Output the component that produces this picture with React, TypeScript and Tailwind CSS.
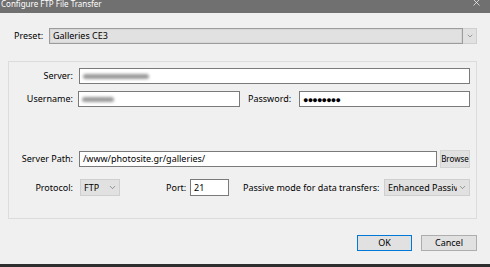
import { ChevronDown, X } from "lucide-react";

const font = { fontFamily: '"Noto Sans", "Liberation Sans", sans-serif' };

const Field = ({ className = "", children }: { className?: string; children?: React.ReactNode }) => (
  <div className={`h-[16px] border border-[#7a7a7a] bg-white flex items-center px-[3px] ${className}`}>{children}</div>
);

const Blur = ({ w }: { w: string }) => (
  <span className={`h-[5px] rounded-full bg-[#9a9a9a] blur-[1.5px] ${w}`} />
);

const Combo = ({ label, className = "" }: { label: string; className?: string }) => (
  <div className={`h-[17px] border border-[#cfcfcf] bg-[#e1e1e1] flex items-center justify-between pl-[3px] pr-[2px] overflow-hidden ${className}`}>
    <span className="whitespace-nowrap overflow-hidden">{label}</span>
    <ChevronDown className="w-[9px] h-[9px] shrink-0 ml-[1px] text-[#555]" strokeWidth={1.5} />
  </div>
);

export default function App() {
  return (
    <div className="w-[490px] h-[267px] bg-[#f0f0f0] text-[9px] text-black flex flex-col overflow-hidden" style={font}>
      {/* title bar */}
      <div className="h-[13px] bg-[#707070] flex items-start justify-between overflow-hidden shrink-0">
        <span className="text-white text-[8px] leading-[9px] mt-[-1px] ml-[1px] whitespace-nowrap">Configure FTP File Transfer</span>
        <X className="w-[11px] h-[11px] mt-[-3px] mr-[8px] text-white" strokeWidth={1.5} />
      </div>

      {/* preset */}
      <div className="flex items-center mt-[15px] pl-[14px]">
        <span className="w-[35px]">Preset:</span>
        <div className="h-[16px] w-[414px] border border-[#9c9c9c] bg-[#e1e1e1] flex items-center pl-[3px] shadow-[inset_0_0_0_1px_#d6d6d6]">
          Galleries CE3
        </div>
        <div className="h-[16px] w-[14px] bg-[#e1e1e1] border border-[#cfcfcf] border-l-0 flex items-center justify-center">
          <ChevronDown className="w-[8px] h-[8px] text-[#555]" strokeWidth={1.5} />
        </div>
      </div>

      {/* group box */}
      <div className="mt-[17px] ml-[8px] w-[469px] h-[158px] border border-[#dcdcdc] flex flex-col pr-[6px]">
        <div className="flex items-center mt-[6px]">
          <span className="w-[64px] text-right">Server:</span>
          <Field className="ml-[6px] flex-1">
            <Blur w="w-[66px]" />
          </Field>
        </div>
        <div className="flex items-center mt-[7px]">
          <span className="w-[64px] text-right">Username:</span>
          <Field className="ml-[5px] w-[162px]">
            <Blur w="w-[32px]" />
          </Field>
          <span className="ml-[8px] w-[42px] whitespace-nowrap">Password:</span>
          <Field className="ml-[9px] flex-1">
            <span className="text-[9px] tracking-[-0.8px] leading-none">●●●●●●●●</span>
          </Field>
        </div>
        <div className="flex items-center mt-[43px]">
          <span className="w-[64px] text-right">Server Path:</span>
          <Field className="ml-[6px] w-[358px]">/www/photosite.gr/galleries/</Field>
          <div className="ml-[3px] h-[18px] flex-1 bg-[#e1e1e1] border border-[#d4d4d4] flex items-center justify-center text-[8px]">Browse</div>
        </div>
        <div className="flex items-center mt-[11px]">
          <span className="w-[64px] text-right">Protocol:</span>
          <Combo label="FTP" className="ml-[7px] w-[40px]" />
          <span className="ml-[46px] w-[20px]">Port:</span>
          <Field className="ml-[4px] w-[39px] h-[17px]">21</Field>
          <span className="ml-[14px] w-[133px] whitespace-nowrap">Passive mode for data transfers:</span>
          <Combo label="Enhanced Passive" className="ml-[8px] flex-1" />
        </div>
      </div>

      {/* buttons */}
      <div className="flex justify-end mt-[16px] pr-[13px] gap-[9px]">
        <div className="w-[55px] h-[16px] bg-[#e1e1e1] border border-[#0078d7] flex items-center justify-center">OK</div>
        <div className="w-[56px] h-[16px] bg-[#e1e1e1] border border-[#adadad] flex items-center justify-center">Cancel</div>
      </div>

      <div className="flex-1" />
      <div className="h-[3px] bg-[#2e2e2e] shrink-0" />
    </div>
  );
}
